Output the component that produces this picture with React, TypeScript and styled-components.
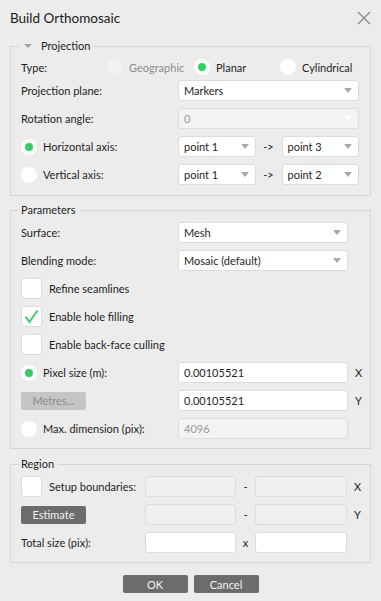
import React from 'react'
import styled, { createGlobalStyle } from 'styled-components'

const GlobalStyle = createGlobalStyle`
  html, body {
    margin: 0;
    background: #ececec;
  }
  body {
    font-family: Lato, "Liberation Sans", sans-serif;
  }
`

const Dialog = styled.div`
  width: 381px;
  height: 601px;
  box-sizing: border-box;
  padding: 0 10px;
  background: #ececec;
  color: #1e1e1e;
  font-size: 11px;
  display: flex;
  flex-direction: column;
`

const TitleBar = styled.div`
  height: 36px;
  display: flex;
  align-items: center;
  justify-content: space-between;
  font-size: 13.5px;
  color: #1a1a1a;
`

const CloseButton = styled.button`
  border: 0;
  background: none;
  padding: 0;
  width: 14px;
  height: 14px;
  display: flex;
  cursor: pointer;
`

const Group = styled.fieldset<{ $top: number; $bottom: number }>`
  margin: ${(p) => p.$top}px 0 0;
  padding: 0 11px ${(p) => p.$bottom}px 10px;
  border: 1px solid #d6d6d6;
  min-width: 0;
`

const Legend = styled.legend`
  padding: 0 4px 0 2px;
  margin-left: -2px;
  line-height: 16px;
  display: flex;
  align-items: center;
  color: #1e1e1e;
`

const Caret = styled.span`
  width: 0;
  height: 0;
  border-left: 4px solid transparent;
  border-right: 4px solid transparent;
  border-top: 4px solid #a3a3a3;
  margin: 0 9px 0 3px;
`

const Body = styled.div<{ $top?: number }>`
  display: flex;
  flex-direction: column;
  gap: 7px;
  padding-top: ${(p) => p.$top ?? 4}px;
`

const Row = styled.div<{ $cols: string; $height?: number; $after?: number }>`
  display: grid;
  grid-template-columns: ${(p) => p.$cols};
  align-items: center;
  height: ${(p) => p.$height ?? 21}px;
  margin-bottom: ${(p) => p.$after ?? 0}px;
`

const Label = styled.span<{ $muted?: boolean }>`
  color: ${(p) => (p.$muted ? '#8d8d8d' : '#1e1e1e')};
  white-space: nowrap;
`

const Option = styled.label`
  display: flex;
  align-items: center;
  gap: 6px;
`

const Radio = styled.span<{ $checked?: boolean; $disabled?: boolean }>`
  width: 16px;
  height: 16px;
  border-radius: 50%;
  flex: none;
  background: ${(p) => (p.$disabled ? '#f2f2f2' : '#ffffff')};
  display: flex;
  align-items: center;
  justify-content: center;

  &::after {
    content: '';
    width: 8px;
    height: 8px;
    border-radius: 50%;
    background: #2fcf60;
    display: ${(p) => (p.$checked ? 'block' : 'none')};
  }
`

const Box = styled.span`
  width: 19px;
  height: 19px;
  flex: none;
  background: #ffffff;
  border: 1px solid #dcdcdc;
  border-radius: 3px;
  display: flex;
  align-items: center;
  justify-content: center;
`

const CheckOption = styled.label`
  display: flex;
  align-items: center;
  gap: 7px;
`

const Combo = styled.div<{ $disabled?: boolean }>`
  height: 21px;
  box-sizing: border-box;
  border: 1px solid #dcdcdc;
  border-radius: 3px;
  background: ${(p) => (p.$disabled ? '#f3f3f3' : '#ffffff')};
  color: ${(p) => (p.$disabled ? '#9b9b9b' : '#1e1e1e')};
  display: flex;
  align-items: center;
  justify-content: space-between;
  padding: 0 6px 0 5px;
  min-width: 0;

  &::after {
    content: '';
    width: 0;
    height: 0;
    border-left: 4px solid transparent;
    border-right: 4px solid transparent;
    border-top: 5px solid ${(p) => (p.$disabled ? '#ffffff' : '#a8a8a8')};
  }
`

const Field = styled.div<{ $disabled?: boolean; $locked?: boolean }>`
  height: 21px;
  box-sizing: border-box;
  border: 1px solid #dcdcdc;
  border-radius: 3px;
  background: ${(p) => (p.$locked ? '#f0f0f0' : p.$disabled ? '#f3f3f3' : '#ffffff')};
  color: ${(p) => (p.$disabled ? '#9b9b9b' : '#1e1e1e')};
  display: flex;
  align-items: center;
  padding: 0 5px;
  min-width: 0;
`

const Pair = styled.div`
  display: grid;
  grid-template-columns: 1fr 26px 1fr;
  align-items: center;
`

const Sep = styled.span`
  text-align: center;
  color: #1e1e1e;
`

const Axis = styled.span`
  padding-left: 7px;
`

const Button = styled.button<{ $disabled?: boolean }>`
  width: 65px;
  height: 18px;
  padding: 0;
  border: 0;
  border-radius: 2px;
  font: inherit;
  font-size: 11px;
  background: ${(p) => (p.$disabled ? '#c5c5c5' : '#6c6c6c')};
  color: ${(p) => (p.$disabled ? '#8b8b8b' : '#f2f2f2')};
  cursor: pointer;
`

const Footer = styled.div`
  display: flex;
  justify-content: center;
  gap: 6px;
  margin-top: 12px;
`

function Check() {
  return (
    <svg width="15" height="15" viewBox="0 0 15 15">
      <path d="M1.5 7.8 L5.5 12.8 L13.5 1.5" fill="none" stroke="#3ccf6b" strokeWidth="2" />
    </svg>
  )
}

export default function App() {
  return (
    <>
      <GlobalStyle />
      <Dialog>
        <TitleBar>
          <span>Build Orthomosaic</span>
          <CloseButton aria-label="Close">
            <svg width="14" height="14" viewBox="0 0 14 14">
              <path d="M1 1 L13 13 M13 1 L1 13" stroke="#8c8c8c" strokeWidth="1.4" />
            </svg>
          </CloseButton>
        </TitleBar>

        <Group $top={2} $bottom={10}>
          <Legend>
            <Caret />
            Projection
          </Legend>
          <Body $top={3}>
            <Row $cols="86px 87px 86px 1fr" $height={20} $after={-4}>
              <Label>Type:</Label>
              <Option>
                <Radio $disabled />
                <Label $muted>Geographic</Label>
              </Option>
              <Option>
                <Radio $checked />
                <Label>Planar</Label>
              </Option>
              <Option>
                <Radio />
                <Label>Cylindrical</Label>
              </Option>
            </Row>
            <Row $cols="157px 1fr">
              <Label>Projection plane:</Label>
              <Combo>Markers</Combo>
            </Row>
            <Row $cols="157px 1fr">
              <Label>Rotation angle:</Label>
              <Combo $disabled>0</Combo>
            </Row>
            <Row $cols="157px 1fr">
              <Option>
                <Radio $checked />
                <Label>Horizontal axis:</Label>
              </Option>
              <Pair>
                <Combo>point 1</Combo>
                <Sep>-&gt;</Sep>
                <Combo>point 3</Combo>
              </Pair>
            </Row>
            <Row $cols="157px 1fr">
              <Option>
                <Radio />
                <Label>Vertical axis:</Label>
              </Option>
              <Pair>
                <Combo>point 1</Combo>
                <Sep>-&gt;</Sep>
                <Combo>point 2</Combo>
              </Pair>
            </Row>
          </Body>
        </Group>

        <Group $top={6} $bottom={9}>
          <Legend>Parameters</Legend>
          <Body>
            <Row $cols="157px 170px 1fr">
              <Label>Surface:</Label>
              <Combo>Mesh</Combo>
            </Row>
            <Row $cols="157px 170px 1fr">
              <Label>Blending mode:</Label>
              <Combo>Mosaic (default)</Combo>
            </Row>
            <Row $cols="1fr">
              <CheckOption>
                <Box />
                <Label>Refine seamlines</Label>
              </CheckOption>
            </Row>
            <Row $cols="1fr">
              <CheckOption>
                <Box>
                  <Check />
                </Box>
                <Label>Enable hole filling</Label>
              </CheckOption>
            </Row>
            <Row $cols="1fr">
              <CheckOption>
                <Box />
                <Label>Enable back-face culling</Label>
              </CheckOption>
            </Row>
            <Row $cols="157px 170px 1fr">
              <Option>
                <Radio $checked />
                <Label>Pixel size (m):</Label>
              </Option>
              <Field>0.00105521</Field>
              <Axis>X</Axis>
            </Row>
            <Row $cols="157px 170px 1fr">
              <div>
                <Button $disabled>Metres...</Button>
              </div>
              <Field>0.00105521</Field>
              <Axis>Y</Axis>
            </Row>
            <Row $cols="157px 170px 1fr">
              <Option>
                <Radio />
                <Label>Max. dimension (pix):</Label>
              </Option>
              <Field $disabled>4096</Field>
            </Row>
          </Body>
        </Group>

        <Group $top={7} $bottom={9}>
          <Legend>Region</Legend>
          <Body>
            <Row $cols="124px 91px 19px 92px 1fr">
              <CheckOption>
                <Box />
                <Label>Setup boundaries:</Label>
              </CheckOption>
              <Field $locked />
              <Sep>-</Sep>
              <Field $locked />
              <Axis>X</Axis>
            </Row>
            <Row $cols="124px 91px 19px 92px 1fr">
              <div>
                <Button>Estimate</Button>
              </div>
              <Field $locked />
              <Sep>-</Sep>
              <Field $locked />
              <Axis>Y</Axis>
            </Row>
            <Row $cols="124px 91px 19px 92px 1fr">
              <Label>Total size (pix):</Label>
              <Field />
              <Sep>x</Sep>
              <Field />
            </Row>
          </Body>
        </Group>

        <Footer>
          <Button>OK</Button>
          <Button>Cancel</Button>
        </Footer>
      </Dialog>
    </>
  )
}
